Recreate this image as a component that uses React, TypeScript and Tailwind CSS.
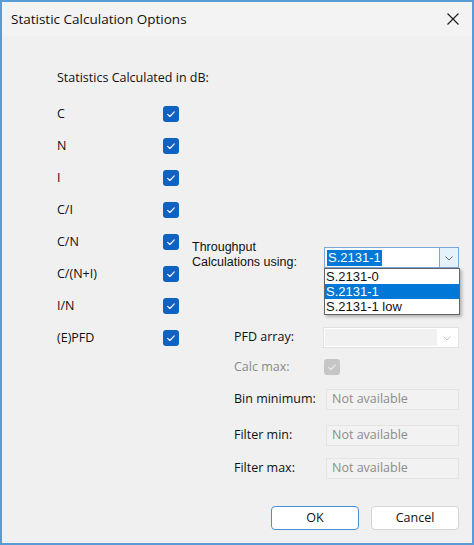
const CheckBox = ({ disabled = false }: { disabled?: boolean }) => (
  <div
    className={
      "w-4 h-4 rounded-[3px] flex items-center justify-center " +
      (disabled ? "bg-[#c6c6c6]" : "bg-[#0f62c0]")
    }
  >
    <svg className="w-4 h-4" viewBox="0 0 16 16" fill="none">
      <path
        d="M4.6 8.3l2.3 2.2 4.4-4.6"
        stroke={disabled ? "#ececec" : "#ffffff"}
        strokeWidth="1.1"
        strokeLinecap="round"
        strokeLinejoin="round"
      />
    </svg>
  </div>
);

const Chevron = ({ color }: { color: string }) => (
  <svg className="w-[10px] h-[10px]" viewBox="0 0 10 10" fill="none">
    <path d="M1.5 3.5L5 7l3.5-3.5" stroke={color} strokeWidth="1" />
  </svg>
);

const NotAvailable = () => (
  <div className="w-[133px] h-[21px] ml-[2px] bg-[#f2f2f2] border border-[#e4e4e4] flex items-center px-[5px] text-[12.5px] text-[#8c8c8c]">
    Not available
  </div>
);

const stats = ["C", "N", "I", "C/I", "C/N", "C/(N+I)", "I/N", "(E)PFD"];

export default function App() {
  return (
    <div className="w-[474px] h-[545px] border-2 border-[#5b9bd5] bg-[#f0f0f0] flex flex-col font-['Open_Sans',sans-serif] text-[#111111]">
      {/* title bar */}
      <div className="h-[34px] flex items-center justify-between pl-[9px] pr-[13px] bg-[#f3f3f3]">
        <span className="text-[13.5px]">Statistic Calculation Options</span>
        <svg className="w-3 h-3" viewBox="0 0 12 12" fill="none">
          <path d="M0.5 0.5l11 11M11.5 0.5l-11 11" stroke="#1b1b1b" strokeWidth="1.1" />
        </svg>
      </div>

      {/* body */}
      <div className="flex-1 flex flex-col pl-[55px] pr-[13px] pt-[33px] pb-[13px] text-[12.5px]">
        <div className="h-[18px] flex items-center">Statistics Calculated in dB:</div>

        <div className="flex items-start mt-[11px]">
          {/* left checklist */}
          <div className="flex flex-col w-[135px]">
            {stats.map((s) => (
              <div key={s} className="h-8 flex items-center">
                <span className="w-[106px]">{s}</span>
                <CheckBox />
              </div>
            ))}
          </div>

          {/* right options */}
          <div className="flex flex-col mt-[142px] w-[267px]">
            <div className="flex items-start h-[87px]">
              <div className="w-[132px] font-['Liberation_Sans',sans-serif] text-[12.5px] leading-[15px]">
                Throughput
                <br />
                Calculations using:
              </div>
              <div className="relative mt-[7px]">
                <div className="w-[135px] h-[21px] bg-white border border-[#7aa7d8] flex items-center">
                  <div className="flex-1 pl-[2px] font-['Liberation_Sans',sans-serif] text-[13px]">
                    <span className="bg-[#0078d7] text-white px-[1px] leading-[16px] inline-block">S.2131-1</span>
                  </div>
                  <div className="w-[19px] h-full bg-[#e5f1fb] border-l border-[#7aa7d8] flex items-center justify-center">
                    <Chevron color="#6d6d6d" />
                  </div>
                </div>
                {/* open dropdown list */}
                <div className="absolute left-0 top-[21px] w-[136px] bg-white border border-[#646464] shadow-[2px_2px_3px_rgba(0,0,0,0.25)] font-['Liberation_Sans',sans-serif] text-[13px] leading-[15px]">
                  <div className="px-[1px]">S.2131-0</div>
                  <div className="px-[1px] bg-[#0078d7] text-white">S.2131-1</div>
                  <div className="px-[1px]">S.2131-1 low</div>
                </div>
              </div>
            </div>

            <div className="flex items-center h-[21px] pl-[42px]">
              <span className="w-[89px]">PFD array:</span>
              <div className="w-[136px] h-[21px] bg-white border border-[#e2e2e2] flex items-center p-[1px]">
                <div className="flex-1 h-full bg-[#f1f1f1]" />
                <div className="w-[20px] flex items-center justify-center">
                  <Chevron color="#c4c4c4" />
                </div>
              </div>
            </div>

            <div className="flex items-center h-4 mt-[11px] pl-[42px]">
              <span className="w-[90px] text-[#8a8a8a]">Calc max:</span>
              <CheckBox disabled />
            </div>

            <div className="flex items-center h-[21px] mt-[14px] pl-[42px]">
              <span className="w-[90px]">Bin minimum:</span>
              <NotAvailable />
            </div>

            <div className="flex items-center h-[21px] mt-[15px] pl-[42px]">
              <span className="w-[90px]">Filter min:</span>
              <NotAvailable />
            </div>

            <div className="flex items-center h-[21px] mt-[12px] pl-[42px]">
              <span className="w-[90px]">Filter max:</span>
              <NotAvailable />
            </div>
          </div>
        </div>

        {/* buttons */}
        <div className="mt-auto flex justify-end gap-3">
          <button className="w-[88px] h-6 rounded-[4px] bg-white border border-[#4a8fd6] text-[12.5px]">OK</button>
          <button className="w-[88px] h-6 rounded-[4px] bg-white border border-[#d4d4d4] text-[12.5px]">Cancel</button>
        </div>
      </div>
    </div>
  );
}
